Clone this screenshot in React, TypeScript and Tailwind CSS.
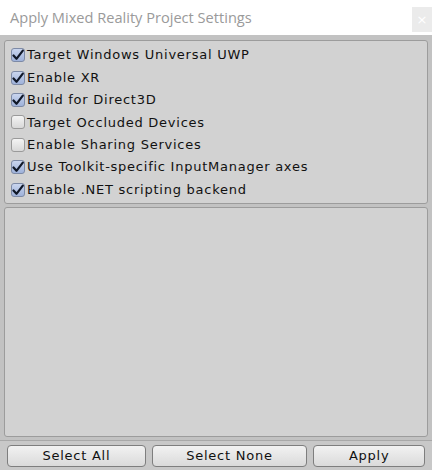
import { useState } from "react";

const options = [
  { label: "Target Windows Universal UWP", checked: true },
  { label: "Enable XR", checked: true },
  { label: "Build for Direct3D", checked: true },
  { label: "Target Occluded Devices", checked: false },
  { label: "Enable Sharing Services", checked: false },
  { label: "Use Toolkit-specific InputManager axes", checked: true },
  { label: "Enable .NET scripting backend", checked: true },
];

function Checkbox({ checked }: { checked: boolean }) {
  return (
    <span
      className={`flex h-[14px] w-[14px] shrink-0 items-center justify-center rounded-[3px] border ${
        checked
          ? "border-[#7d8aa6] bg-gradient-to-b from-[#c9d5ee] to-[#9fb2da]"
          : "border-[#9a9a9a] bg-gradient-to-b from-[#f4f4f4] to-[#d8d8d8]"
      }`}
    >
      {checked && (
        <svg width="12" height="12" viewBox="0 0 12 12">
          <path
            d="M1.5 6.5 L4.5 9.8 L10.8 1.6"
            fill="none"
            stroke="#101828"
            strokeWidth="2.2"
            strokeLinecap="round"
            strokeLinejoin="round"
          />
        </svg>
      )}
    </span>
  );
}

export default function App() {
  const [items, setItems] = useState(options);

  const toggle = (i: number) =>
    setItems((prev) =>
      prev.map((it, idx) => (idx === i ? { ...it, checked: !it.checked } : it))
    );

  return (
    <div className="flex h-[470px] w-[432px] flex-col overflow-hidden bg-[#c2c2c2] font-['DejaVu_Sans',sans-serif] text-[13px] tracking-[0.75px] text-[#111]">
      <div className="flex h-[35px] shrink-0 items-start justify-between bg-white tracking-normal">
        <span className="pl-[10px] pt-[7px] font-['Open_Sans',sans-serif] text-[14.6px] text-[#9a9a9a]">
          Apply Mixed Reality Project Settings
        </span>
        <span className="mt-[7px] flex h-[25px] w-[20px] items-center justify-center bg-[#ebebeb] text-[13px] text-white">
          ×
        </span>
      </div>

      <div className="flex flex-1 flex-col gap-[3px] px-[4px] pt-[5px]">
        <div className="flex flex-col rounded-[3px] border border-[#9c9c9c] bg-[#d2d2d2] px-[6px] pt-[3px] pb-[2px]">
          {items.map((it, i) => (
            <label
              key={it.label}
              onClick={() => toggle(i)}
              className="flex h-[22.4px] cursor-default items-center gap-[2px]"
            >
              <Checkbox checked={it.checked} />
              <span className="whitespace-nowrap">{it.label}</span>
            </label>
          ))}
        </div>
        <div className="h-[230px] rounded-[3px] border border-[#9c9c9c] bg-[#d2d2d2]" />
      </div>

      <div className="flex h-[30px] shrink-0 gap-[6px] border-t border-[#a8a8a8] bg-[#c8c8c8] px-[7px] pt-[4px] pb-[3px]">
        {["Select All", "Select None", "Apply"].map((b, i) => (
          <button
            key={b}
            className={`rounded-[4px] border border-[#7e7e7e] bg-gradient-to-b from-[#f2f2f2] to-[#dadada] text-[13px] tracking-[0.75px] text-[#111] ${
              i === 0 ? "w-[139px]" : i === 1 ? "w-[156px]" : "w-[112px]"
            }`}
          >
            {b}
          </button>
        ))}
      </div>
    </div>
  );
}
